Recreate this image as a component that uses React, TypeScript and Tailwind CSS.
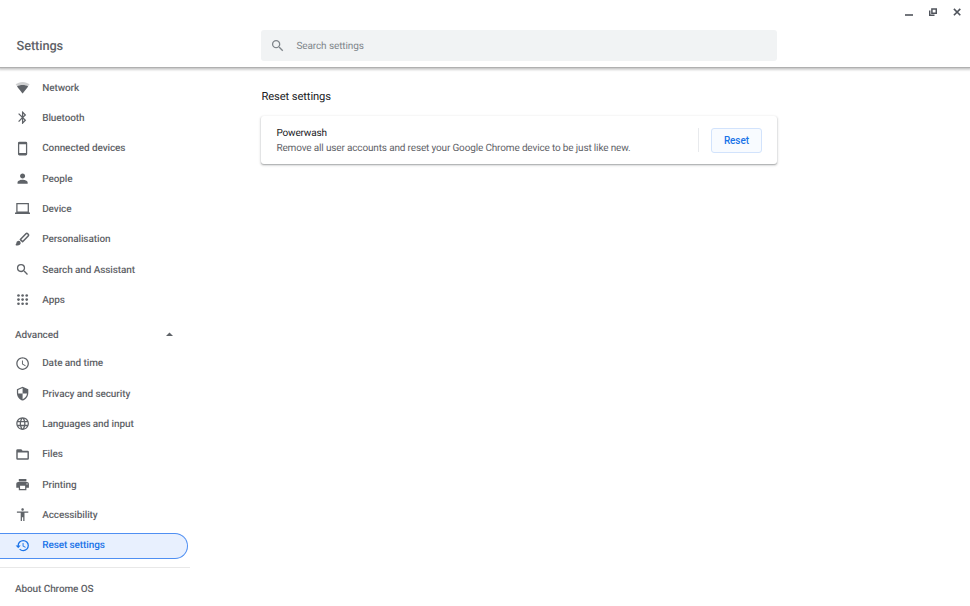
import type { ReactNode } from "react"
import { MdAccessTime, MdBluetooth, MdLanguage, MdPerson, MdPrint, MdSearch } from "react-icons/md"

function Glyph({ children }: { children: ReactNode }) {
  return (
    <svg viewBox="0 0 24 24" className="size-full" fill="currentColor">
      {children}
    </svg>
  )
}

const dots = [5.5, 12, 18.5]

const mainItems = [
  {
    label: "Network",
    icon: (
      <Glyph>
        <path opacity=".3" d="M12 3C7.700 3 3.900 4.500 1 6.800L12 21.500 23 6.800C20.100 4.500 16.300 3 12 3z" />
        <path d="M12 8C8.600 8 5.800 8.900 3.200 10.300L12 21.500l8.800-11.200C18.200 8.900 15.400 8 12 8z" />
      </Glyph>
    ),
  },
  { label: "Bluetooth", icon: <MdBluetooth className="size-full" /> },
  {
    label: "Connected devices",
    icon: (
      <Glyph>
        <path d="M17 1H7a2.300 2.300 0 0 0-2.300 2.300v17.400A2.300 2.300 0 0 0 7 23h10a2.300 2.300 0 0 0 2.300-2.300V3.300A2.300 2.300 0 0 0 17 1zm.3 18H6.700V5h10.600v14z" />
      </Glyph>
    ),
  },
  { label: "People", icon: <MdPerson className="size-full" /> },
  {
    label: "Device",
    icon: (
      <Glyph>
        <path d="M22 18V3H2v15H0v2.500h24V18h-2zm-2-1.500H4V5h16v11.500z" />
      </Glyph>
    ),
  },
  {
    label: "Personalisation",
    icon: (
      <Glyph>
        <path d="M5.500 14a3.700 3.700 0 0 0-3.500 3.600c0 1.400-.7 2.200-1.700 2.600 1 .9 2.200 1.300 3.700 1.300 2.800 0 5-1.600 5-4A3.500 3.500 0 0 0 5.500 14z" />
        <path d="m8.500 12 8.800-9.200a2 2 0 0 1 2.800 0l.7.7a2 2 0 0 1 0 2.800L12 15.500z" fill="none" stroke="currentColor" strokeWidth="2.400" strokeLinejoin="round" />
      </Glyph>
    ),
  },
  { label: "Search and Assistant", icon: <MdSearch className="size-full" /> },
  {
    label: "Apps",
    icon: (
      <Glyph>
        {dots.map((y) => dots.map((x) => <circle key={`${x}-${y}`} cx={x} cy={y} r="2.100" />))}
      </Glyph>
    ),
  },
]

const advancedItems = [
  { label: "Date and time", icon: <MdAccessTime className="size-full" /> },
  {
    label: "Privacy and security",
    icon: (
      <Glyph>
        <path d="M12 1 3 5v6c0 5.550 3.840 10.740 9 12 5.160-1.260 9-6.450 9-12V5l-9-4zm0 11h7c-.53 4.120-3.280 7.790-7 8.940V12H5V6.300l7-3.110V12z" />
      </Glyph>
    ),
  },
  { label: "Languages and input", icon: <MdLanguage className="size-full" /> },
  {
    label: "Files",
    icon: (
      <Glyph>
        <path d="M20 6h-8l-2-2.500H4A2 2 0 0 0 2 5.500V18a2 2 0 0 0 2 2h16a2 2 0 0 0 2-2V8a2 2 0 0 0-2-2zm-.3 11.700H4.300V8.500h15.400v9.200z" />
      </Glyph>
    ),
  },
  { label: "Printing", icon: <MdPrint className="size-full" /> },
  {
    label: "Accessibility",
    icon: (
      <Glyph>
        <path d="M12 2c1.100 0 2 .9 2 2s-.9 2-2 2-2-.9-2-2 .9-2 2-2zm9 7h-6v13h-2v-6h-2v6H9V9H3V7h18v2z" />
      </Glyph>
    ),
  },
  {
    label: "Reset settings",
    active: true,
    icon: (
      <Glyph>
        <path d="M13 3a9 9 0 0 0-9 9H1l3.890 3.890.07.14L9 12H6c0-3.870 3.130-7 7-7s7 3.130 7 7-3.130 7-7 7c-1.930 0-3.680-.79-4.940-2.060l-1.420 1.420A8.954 8.954 0 0 0 13 21a9 9 0 0 0 0-18zm-1 5v5l4.280 2.540.72-1.210-3.500-2.080V8H12z" />
      </Glyph>
    ),
  },
]

function MenuItem({ label, icon, active }: { label: string; icon: ReactNode; active?: boolean }) {
  return (
    <li className="flex h-[30.330px] items-center">
      <a
        className={
          active
            ? "flex h-[26px] w-[188px] items-center rounded-r-full border border-l-0 border-[#4f8ff2] bg-[#e8f0fe] pl-[15px] text-[#1a73e8]"
            : "flex h-[26px] w-[188px] items-center pl-[15px]"
        }
      >
        <span className="mr-3 mb-px size-[15.200px] shrink-0">{icon}</span>
        {label}
      </a>
    </li>
  )
}

export default function App() {
  return (
    <div className="flex h-[606px] w-[970px] flex-col overflow-hidden bg-white font-['Roboto',sans-serif] text-[10px] tracking-[-0.100px] text-[#5f6368] [text-rendering:geometricPrecision]">
      {/* Window controls and toolbar */}
      <header className="z-10 h-[67px] shrink-0 bg-white shadow-[0_1px_1px_#b0b0b0,0_2px_2px_1px_#d0d0d0]">
        <div className="flex h-[30px] items-start justify-end gap-[16px] pr-[8.600px] pt-[8px] text-[#50545c]">
          <svg className="size-[8px]" viewBox="0 0 8 8">
            <path d="M0 7h8" stroke="currentColor" strokeWidth="1.600" />
          </svg>
          <svg className="size-[8px]" viewBox="0 0 8 8" fill="none" stroke="currentColor" strokeWidth="1.500">
            <path d="M2.900.9h4.400v4.400H2.900zM.7 2.500v4.800h4.800" />
          </svg>
          <svg className="size-[8px]" viewBox="0 0 8 8" stroke="currentColor" strokeWidth="1.600">
            <path d="m.9.9 6.400 6.400M7.300.9.9 7.300" />
          </svg>
        </div>
        <div className="flex h-[31px] items-center">
          <h1 className="w-[261.400px] pl-[16.500px] pt-[2px] text-[12.800px] font-medium">Settings</h1>
          <div className="flex h-[31px] w-[515.500px] items-center rounded-[3px] bg-[#f1f3f4] pl-[9px] text-[#80868b]">
            <MdSearch className="mr-[10.500px] size-[15.500px]" />
            <span className="pt-px">Search settings</span>
          </div>
        </div>
      </header>

      <div className="flex min-h-0 flex-1">
        {/* Sidebar */}
        <nav className="w-[261.400px] shrink-0 pt-[6px] font-medium">
          <ul>
            {mainItems.map((item) => (
              <MenuItem key={item.label} {...item} />
            ))}
          </ul>
          <div className="flex h-[33px] w-[173px] items-center justify-between pt-[6.700px] pl-[15px]">
            <span>Advanced</span>
            <svg className="mb-[2px] h-[4px] w-[7px]" viewBox="0 0 7 4" fill="currentColor">
              <path d="M0 4 3.500.4 7 4z" />
            </svg>
          </div>
          <ul>
            {advancedItems.map((item) => (
              <MenuItem key={item.label} {...item} />
            ))}
          </ul>
          <div className="mt-[6px] w-[190px] border-t border-[#e8e8e8]" />
          <div className="mt-[14px] pl-[15px]">About Chrome OS</div>
        </nav>

        {/* Reset section */}
        <main className="w-[515.500px] pt-[22px]">
          <h2 className="text-[11.200px] leading-[15px] text-[#202124]">Reset settings</h2>
          <section className="mt-[12px] flex h-[48px] items-center rounded-[3px] bg-white pr-[15px] pl-[15px] shadow-[0_1px_1px_rgba(60,64,67,0.300),0_1px_2px_1px_rgba(60,64,67,0.150)]">
            <div className="flex-1 pt-px leading-[15px] tracking-[-0.155px]">
              <div className="text-[#202124]">Powerwash</div>
              <div>Remove all user accounts and reset your Google Chrome device to be just like new.</div>
            </div>
            <div className="mr-3 h-6 border-l border-[#e8eaed]" />
            <button className="h-[25px] w-[51px] rounded-[3px] border border-[#d2e3fc] bg-[#f8fbff] font-medium text-[#1a73e8]">
              Reset
            </button>
          </section>
        </main>
      </div>
    </div>
  )
}
